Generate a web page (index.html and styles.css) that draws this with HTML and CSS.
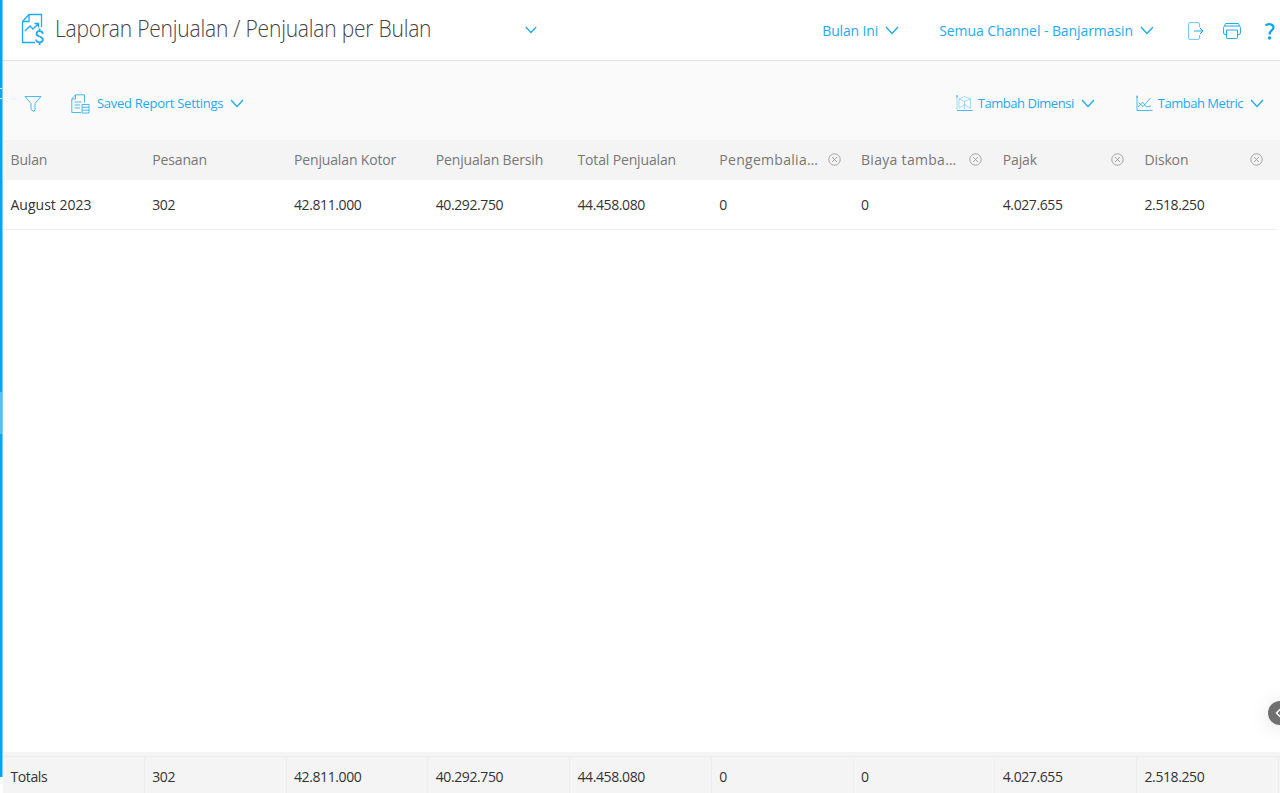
FILE: index.html
```html
<!DOCTYPE html>
<html lang="id">

<head>
    <meta charset="UTF-8">
    <meta name="viewport" content="width=device-width, initial-scale=1.0">
    <title>Laporan Penjualan</title>
    <link rel="stylesheet" href="styles.css">
</head>

<body>
    <div id="app">
        <aside id="sidebar">
            <span class="mark"></span>
            <span class="mark second"></span>
            <span class="current"></span>
        </aside>

        <main id="report">
            <header class="page-header">
                <svg class="report-icon" width="24" height="34" viewBox="0 0 24 34">
                    <path d="M14 29.5H1.500V8.500L8 1.500H20.500V14M1.500 8.500H8V1.500" />
                    <path d="M4 18L9 13L12 16L17.500 10.500M13.500 10.500H17.500V14.500" />
                    <path class="thick" d="M21.800 20.800C21.500 17.300 15.500 17.300 15.500 20.800C15.500 24.500 21.800 22.500 21.800 26.500C21.800 30.300 15.500 30.300 15 26.500M18.600 15.500V18M18.600 29V32" />
                </svg>
                <h1>Laporan Penjualan / Penjualan per Bulan</h1>
                <svg class="chevron small" width="12" height="8" viewBox="0 0 12 8"><path d="M.8 1L6 6.500L11.200 1" /></svg>

                <div class="header-actions">
                    <a class="menu period"><span>Bulan Ini</span>
                        <svg class="chevron" width="14" height="9" viewBox="0 0 14 9"><path d="M1 1L7 7.500L13 1" /></svg>
                    </a>
                    <a class="menu channel"><span>Semua Channel - Banjarmasin</span>
                        <svg class="chevron" width="14" height="9" viewBox="0 0 14 9"><path d="M1 1L7 7.500L13 1" /></svg>
                    </a>
                    <svg class="export-icon" width="16" height="18" viewBox="0 0 16 18">
                        <path class="pale" d="M11.500 5V2Q11.500 .6 10 .6H2Q.6 .6 .6 2V16Q.6 17.400 2 17.400H10Q11.500 17.400 11.500 16V13" />
                        <path d="M6 9H15M12 6L15 9L12 12" />
                    </svg>
                    <svg class="print-icon" width="18" height="18" viewBox="0 0 18 18">
                        <path d="M3.500 12.500H2Q.6 12.500 .6 11V5.500Q.6 4 2 4H16Q17.400 4 17.400 5.500V11Q17.400 12.500 16 12.500H14.500M2 4V2.500Q2 1.500 3 1.500H15Q16 1.500 16 2.500V4M3.500 8H14.500V15.500Q14.500 16.500 13.500 16.500H4.500Q3.500 16.500 3.500 15.500Z" />
                    </svg>
                    <svg class="help-icon" width="11" height="17" viewBox="0 0 11 17">
                        <path d="M1.500 2.500C4 .4 9.500 .8 9.500 4.500C9.500 7.500 5.500 7.500 5.500 11.500" /><circle cx="5.500" cy="15" r="1.700" />
                    </svg>
                </div>
            </header>

            <section class="toolbar">
                <svg class="filter-icon" width="18" height="18" viewBox="0 0 18 18">
                    <path d="M1 1.500H17L11 8.500V14.500L10 16.500L7 14.500V8.500Z" />
                </svg>
                <svg class="saved-icon" width="19" height="20" viewBox="0 0 19 20">
                    <path d="M10 18.500H.8V5L4.500 .8H13.500V8.500M.8 5H4.500V.8M3.500 8H10.500M3.500 11H9M3.500 14H9M11 10.500H18V19H11ZM11 13.300H18M11 16.200H18" />
                </svg>
                <a class="menu saved"><span>Saved Report Settings</span>
                    <svg class="chevron" width="14" height="9" viewBox="0 0 14 9"><path d="M1 1L7 7.500L13 1" /></svg>
                </a>

                <div class="add-actions">
                    <svg class="dimension-icon" width="17" height="17" viewBox="0 0 17 17">
                        <path class="faint" d="M3 4L8.500 1.500L14.500 4V13.500M3 4V13.500M3 4L8.500 6.500L14.500 4M8.500 6.500V14M3.500 13L8.500 9.500L14 13" />
                        <path d="M1 .5V2.500M0 1H2M1 15.500H16.500" />
                        <path class="faint" d="M1 2V15" />
                    </svg>
                    <a class="menu dimension"><span>Tambah Dimensi</span>
                        <svg class="chevron" width="14" height="9" viewBox="0 0 14 9"><path d="M1 1L7 7.500L13 1" /></svg>
                    </a>
                    <svg class="metric-icon" width="17" height="17" viewBox="0 0 17 17">
                        <path d="M1 .5V15.500H16.500M0 2H2M2 12L6.500 7L10.500 12L15 11M2.500 7.500L7 11.500L14.500 3" />
                    </svg>
                    <a class="menu metric"><span>Tambah Metric</span>
                        <svg class="chevron" width="14" height="9" viewBox="0 0 14 9"><path d="M1 1L7 7.500L13 1" /></svg>
                    </a>
                </div>
            </section>

            <div class="row head">
                <div>Bulan</div>
                <div>Pesanan</div>
                <div>Penjualan Kotor</div>
                <div>Penjualan Bersih</div>
                <div>Total Penjualan</div>
                <div><span class="clipped">Pengembalia…</span><svg class="remove" width="13" height="13" viewBox="0 0 13 13"><circle cx="6.500" cy="6.500" r="5.700" /><path d="M4 4L9 9M9 4L4 9" /></svg></div>
                <div><span class="clipped">Biaya tamba…</span><svg class="remove" width="13" height="13" viewBox="0 0 13 13"><circle cx="6.500" cy="6.500" r="5.700" /><path d="M4 4L9 9M9 4L4 9" /></svg></div>
                <div><span>Pajak</span><svg class="remove" width="13" height="13" viewBox="0 0 13 13"><circle cx="6.500" cy="6.500" r="5.700" /><path d="M4 4L9 9M9 4L4 9" /></svg></div>
                <div><span>Diskon</span><svg class="remove" width="13" height="13" viewBox="0 0 13 13"><circle cx="6.500" cy="6.500" r="5.700" /><path d="M4 4L9 9M9 4L4 9" /></svg></div>
            </div>
            <div class="row data">
                <div class="month">August 2023</div>
                <div>302</div>
                <div>42.811.000</div>
                <div>40.292.750</div>
                <div>44.458.080</div>
                <div>0</div>
                <div>0</div>
                <div>4.027.655</div>
                <div>2.518.250</div>
            </div>

            <footer class="totals">
                <div class="row">
                    <div>Totals</div>
                    <div>302</div>
                    <div>42.811.000</div>
                    <div>40.292.750</div>
                    <div>44.458.080</div>
                    <div>0</div>
                    <div>0</div>
                    <div>4.027.655</div>
                    <div>2.518.250</div>
                </div>
            </footer>
        </main>

        <button id="drawer-button" type="button" aria-label="Open">
            <svg width="8" height="12" viewBox="0 0 8 12"><path d="M6 1.500L1.500 6L6 10.500" /></svg>
        </button>
    </div>
</body>

</html>
```
FILE: styles.css
```css
* {
    box-sizing: border-box;
}

body {
    margin: 0;
    overflow: hidden;
    background-color: #fff;
    color: #333;
    font-family: "Open Sans", "Noto Sans", sans-serif;
    font-size: 14px;
}

#app {
    position: relative;
    display: flex;
    height: 793px;
    overflow: hidden;
}

/* Edge of the collapsed sidebar */
#sidebar {
    display: flex;
    flex-direction: column;
    width: 3px;
    height: 777px;
    flex-shrink: 0;
    background-color: #03a5f5;
    border-right: 1px solid #7fcdf5;
}

#sidebar .mark {
    height: 1px;
    margin-top: 88px;
    background-color: #d8f1ff;
}

#sidebar .second {
    margin-top: 9px;
}

#sidebar .current {
    height: 42px;
    margin-top: 293px;
    background-color: #57bff5;
}

#report {
    display: flex;
    flex-direction: column;
    flex: 1;
    min-width: 0;
}

svg {
    display: block;
    flex-shrink: 0;
    fill: none;
    stroke: #1eaaf1;
    stroke-width: 1;
}

/* Header */
.page-header {
    display: flex;
    align-items: center;
    height: 61px;
    padding-left: 18px;
    border-bottom: 1px solid #e2e2e2;
}

.report-icon {
    margin-top: -1px;
    stroke-width: 1.3;
}

.report-icon .thick {
    stroke-width: 1.8;
}

h1 {
    width: 378px;
    margin: -4px 0 0 10px;
    color: #444;
    font-size: 23px;
    font-weight: 300;
    letter-spacing: -0.25px;
    white-space: nowrap;
    transform: scaleX(0.915);
    transform-origin: left;
}

.chevron {
    margin-left: 7px;
    stroke-width: 1.3;
}

.chevron.small {
    margin-left: 92px;
}

.header-actions,
.add-actions {
    display: flex;
    align-items: center;
    margin-left: auto;
}

.header-actions {
    padding-top: 1px;
}

.menu {
    display: flex;
    align-items: center;
    color: #1eaaf1;
    white-space: nowrap;
}

.channel {
    margin-left: 40px;
}

.export-icon {
    margin-left: 34px;
}

.export-icon .pale {
    opacity: 0.65;
}

.print-icon {
    margin-left: 19px;
}

.help-icon {
    margin: 1px 5px 0 23px;
    stroke: #0aa5f2;
    stroke-width: 2.2;
}

.help-icon circle {
    fill: #0aa5f2;
    stroke: none;
}

.period span {
    letter-spacing: -0.15px;
}

.channel span {
    letter-spacing: -0.08px;
}

/* Toolbar */
.toolbar {
    display: flex;
    align-items: center;
    height: 79px;
    padding: 6px 16px 0 21px;
    background-color: #fafafa;
    font-size: 13px;
}

.toolbar svg {
    stroke-width: 0.8;
}

.toolbar .chevron {
    stroke-width: 1.3;
}

.toolbar .menu span {
    margin-top: -1px;
}

.saved-icon {
    margin-left: 29px;
}

.saved {
    margin-left: 7px;
}

.saved span {
    letter-spacing: -0.28px;
}

.dimension,
.metric {
    margin-left: 5px;
    letter-spacing: -0.47px;
}

.faint {
    opacity: 0.5;
}

.metric-icon {
    margin-left: 41px;
}

/* Table */
.row {
    display: grid;
    grid-template-columns: repeat(9, 141.75px);
}

.row > div {
    display: flex;
    align-items: center;
    padding-left: 7.5px;
    white-space: nowrap;
}

.head {
    height: 40px;
    padding-bottom: 2px;
    background-color: #f4f4f4;
    color: #777;
    letter-spacing: -0.15px;
}

.clipped {
    letter-spacing: 0.3px;
}

.remove {
    margin-left: auto;
    margin-right: 13px;
    stroke: #999;
    stroke-width: 0.9;
}

.head > div:last-child .remove {
    margin-right: 15.5px;
}

.data {
    width: 1274px;
    height: 50px;
    border-bottom: 1px solid #eee;
    letter-spacing: -0.4px;
}

.month {
    letter-spacing: 0;
}

.totals {
    height: 41px;
    margin-top: auto;
    padding-top: 4px;
    background-color: #f4f4f4;
    letter-spacing: -0.4px;
}

.totals .row {
    height: 37px;
    border-top: 1px solid #eee;
}

.totals .row > div {
    border-right: 1px solid #efefef;
    padding-top: 3px;
}

/* Drawer handle over the right edge */
#drawer-button {
    position: absolute;
    top: 701px;
    right: -12px;
    display: flex;
    align-items: center;
    width: 24px;
    height: 24px;
    padding: 0 0 0 7px;
    border: 0;
    border-radius: 50%;
    background-color: #707070;
    box-shadow: 0 2px 20px rgba(0, 0, 0, 0.12);
}

#drawer-button svg {
    stroke: #fff;
    stroke-width: 1.5;
}
```
